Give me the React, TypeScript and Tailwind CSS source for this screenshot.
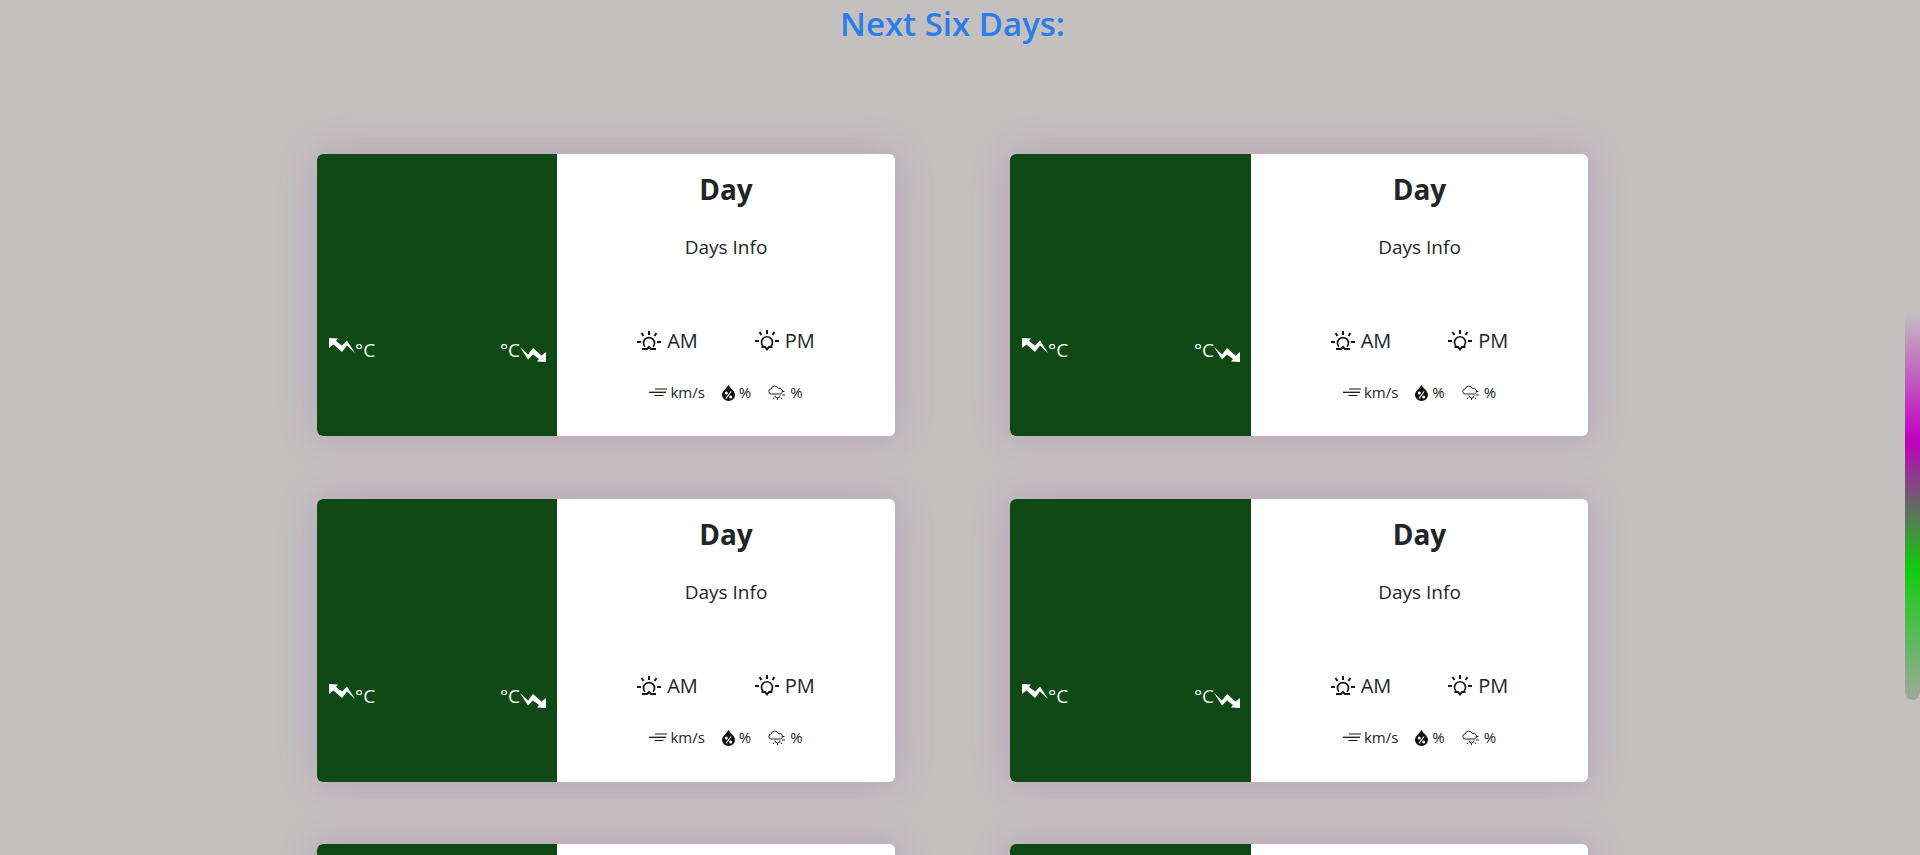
const FONT = "font-['Open_Sans','Noto_Sans',sans-serif]";

function SunUp() {
  return (
    <svg width="24" height="20" viewBox="0 0 24 20" fill="none" stroke="#151515" strokeWidth="2" className="shrink-0">
      <path d="M12 0v4M4.500 2l2 3M19.500 2l-2 3M0 11h4M20 11h4" />
      <path d="M8 15.800a5.500 5.500 0 1 1 8 0" strokeWidth="1.700" />
      <path d="M5 18h5l2-2 2 2h5" />
    </svg>
  );
}

function SunDown() {
  return (
    <svg width="24" height="22" viewBox="0 0 24 22" fill="none" stroke="#151515" strokeWidth="2" className="shrink-0">
      <path d="M12 0v4M4.500 2l2 3M19.500 2l-2 3M0 11h4M20 11h4" />
      <path d="M8 16a5.500 5.500 0 1 1 8 0" strokeWidth="1.700" />
      <path d="M6.500 17H10l2 2.500 2-2.500h3.500" />
    </svg>
  );
}

function Wind() {
  return (
    <svg width="18" height="9" viewBox="0 0 18 9" fill="none" stroke="#151515" className="shrink-0">
      <path d="M6 1h12" strokeWidth="1" />
      <path d="M0 4.300h17" strokeWidth="1.300" />
      <path d="M5.500 7.500h9" strokeWidth="1" />
    </svg>
  );
}

function Drop() {
  return (
    <svg width="13" height="16" viewBox="0 0 13 16" className="shrink-0">
      <path d="M6.500 0C8.500 3.500 13 6 13 10a6.500 6 0 0 1-13 0C0 6 4.500 3.500 6.500 0z" fill="#111" />
      <circle cx="4.300" cy="8" r="1.500" fill="#fff" />
      <circle cx="8.700" cy="12" r="1.500" fill="#fff" />
      <path d="M9 6.500l-5 7" stroke="#fff" strokeWidth="1.200" />
    </svg>
  );
}

function CloudSun() {
  return (
    <svg width="17" height="15" viewBox="0 0 17 15" fill="none" stroke="#222" strokeWidth="1" className="shrink-0">
      <path d="M3.500 9a2.500 2.500 0 0 1-.4-5 3.800 3.800 0 0 1 7.200-.6A2.800 2.800 0 0 1 12.500 9z" />
      <path d="M7 10.500a2.500 2.500 0 0 0 5 0M9.500 13v2M6 12.500l-1 1.500M13 12.500l1 1.500M14 10h3M14 6.500h2.500" />
    </svg>
  );
}

function ArrowUpZig() {
  return (
    <svg width="26" height="16" viewBox="0 0 26 16" className="shrink-0">
      <path d="M0 0l9 .5L7 3l6 4.500L18 2.500 26 15l-8-7.500-5 6.500L4.500 6.500 0 10z" fill="#fff" />
    </svg>
  );
}

function ArrowDownZig() {
  return (
    <svg width="26" height="16" viewBox="0 0 26 16" className="shrink-0">
      <path d="M26 16l-9-.5 2-2.500-6-4.500L8 13.500 0 1l8 7.500L13 2l8.500 7.500L26 6z" fill="#fff" />
    </svg>
  );
}

function DayCard({ offset }: { offset: boolean }) {
  return (
    <div className="flex h-[282.45px] w-[578px] rounded-md bg-white shadow-[0_0_40px_rgba(140,40,150,0.2)]">
      <div className={`flex ${offset ? "w-[241px]" : "w-[240px]"} shrink-0 items-end justify-between rounded-l-md bg-[#0f4916] pb-[74px] pl-[12px] pr-[11px] text-white`}>
        <div className="flex items-start text-[19px] leading-[24px]">
          <ArrowUpZig />
          <span>°C</span>
        </div>
        <div className="flex items-end text-[19px] leading-[24px]">
          <span>°C</span>
          <ArrowDownZig />
        </div>
      </div>
      <div className="flex flex-1 flex-col items-center text-[#212529]">
        <h3 className="mt-[18px] text-[28px] font-bold leading-[34px]">Day</h3>
        <p className="mt-[28px] text-[19px] leading-[27px]">Days Info</p>
        <div className="mt-[66px] flex h-[27px] items-center gap-[57px] text-[20px] leading-[27px]">
          <span className="flex items-center gap-[6px]"><SunUp />AM</span>
          <span className="flex items-center gap-[6px]"><SunDown />PM</span>
        </div>
        <div className="mt-[28px] flex h-[21px] items-center gap-[17px] text-[15px] leading-[21px]">
          <span className="flex items-center gap-[3px]"><Wind />km/s</span>
          <span className="flex items-center gap-[4px]"><Drop />%</span>
          <span className="flex items-center gap-[5px]"><CloudSun />%</span>
        </div>
      </div>
    </div>
  );
}

export default function App() {
  return (
    <div className={`relative h-[855px] overflow-hidden bg-[#c4c0c0] ${FONT}`}>
      <div className="w-[1905px]">
        <h2 className="h-[154px] pt-[2px] text-center text-[33px] font-semibold leading-[44px] text-[#2b7de9]">Next Six Days:</h2>
        <div className="grid grid-cols-[578px_578px] justify-center gap-x-[115px] gap-y-[62.75px]">
          {[0, 1, 2, 3, 4, 5].map((i) => (
            <DayCard key={i} offset={i % 2 === 1} />
          ))}
        </div>
      </div>
      {/* scrollbar thumb */}
      <div className="absolute right-0 top-[312px] h-[388px] w-[15px] rounded-b-[8px] bg-[linear-gradient(to_bottom,#c4c0c0_0%,#bf00bf_33%,#10cc10_66%,#a0a89c_100%)]" />
    </div>
  );
}
